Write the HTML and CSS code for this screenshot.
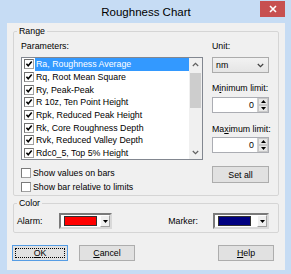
FILE: index.html
```html
<!DOCTYPE html>
<html>
<head>
<meta charset="utf-8">
<link rel="stylesheet" href="styles.css">
</head>
<body>
<div class="window">
  <div class="titlebar">
    <span class="title">Roughness Chart</span>
    <span class="close"><svg width="8" height="8" viewBox="0 0 8 8"><path d="M1 1L7 7M7 1L1 7" stroke="#fff" stroke-width="1.6"/></svg></span>
  </div>
  <div class="client">
    <fieldset class="group range">
      <legend>Range</legend>
      <div class="range-inner">
        <div class="col-left">
          <div class="label">Parameters:</div>
          <div class="listbox">
            <div class="items">
              <div class="item selected"><span class="cb"><svg viewBox="0 0 10 10"><path d="M1.8 4.8L4 7.3L8.4 1.8" fill="none" stroke="#000" stroke-width="1.9"/></svg></span><span class="txt">Ra, Roughness Average</span></div>
              <div class="item"><span class="cb"><svg viewBox="0 0 10 10"><path d="M1.8 4.8L4 7.3L8.4 1.8" fill="none" stroke="#000" stroke-width="1.9"/></svg></span><span class="txt">Rq, Root Mean Square</span></div>
              <div class="item"><span class="cb"><svg viewBox="0 0 10 10"><path d="M1.8 4.8L4 7.3L8.4 1.8" fill="none" stroke="#000" stroke-width="1.9"/></svg></span><span class="txt">Ry, Peak-Peak</span></div>
              <div class="item"><span class="cb"><svg viewBox="0 0 10 10"><path d="M1.8 4.8L4 7.3L8.4 1.8" fill="none" stroke="#000" stroke-width="1.9"/></svg></span><span class="txt">R 10z, Ten Point Height</span></div>
              <div class="item"><span class="cb"><svg viewBox="0 0 10 10"><path d="M1.8 4.8L4 7.3L8.4 1.8" fill="none" stroke="#000" stroke-width="1.9"/></svg></span><span class="txt">Rpk, Reduced Peak Height</span></div>
              <div class="item"><span class="cb"><svg viewBox="0 0 10 10"><path d="M1.8 4.8L4 7.3L8.4 1.8" fill="none" stroke="#000" stroke-width="1.9"/></svg></span><span class="txt">Rk, Core Roughness Depth</span></div>
              <div class="item"><span class="cb"><svg viewBox="0 0 10 10"><path d="M1.8 4.8L4 7.3L8.4 1.8" fill="none" stroke="#000" stroke-width="1.9"/></svg></span><span class="txt">Rvk, Reduced Valley Depth</span></div>
              <div class="item"><span class="cb"><svg viewBox="0 0 10 10"><path d="M1.8 4.8L4 7.3L8.4 1.8" fill="none" stroke="#000" stroke-width="1.9"/></svg></span><span class="txt">Rdc0_5, Top 5% Height</span></div>
            </div>
            <div class="scrollbar">
              <div class="sb-arrow"><svg width="7" height="5" viewBox="0 0 7 5"><path d="M0.8 4L3.5 1.3L6.2 4" fill="none" stroke="#606060" stroke-width="1.2"/></svg></div>
              <div class="sb-track"><div class="sb-thumb"></div></div>
              <div class="sb-arrow"><svg width="7" height="5" viewBox="0 0 7 5"><path d="M0.8 1L3.5 3.7L6.2 1" fill="none" stroke="#606060" stroke-width="1.2"/></svg></div>
            </div>
          </div>
          <div class="check first"><span class="box"></span><span>Show values on bars</span></div>
          <div class="check"><span class="box"></span><span>Show bar relative to limits</span></div>
        </div>
        <div class="col-right">
          <div class="label">Unit:</div>
          <div class="combo"><span>nm</span><svg width="7" height="5" viewBox="0 0 7 5"><path d="M0.8 1L3.5 3.7L6.2 1" fill="none" stroke="#404040" stroke-width="1.2"/></svg></div>
          <div class="label min-label">M<u>i</u>nimum limit:</div>
          <div class="spin min-spin">
            <span class="spin-value">0</span>
            <span class="spin-btns">
              <span class="spin-btn"><svg width="5" height="3" viewBox="0 0 5 3"><path d="M0 3L2.5 0L5 3Z" fill="#000"/></svg></span>
              <span class="spin-btn"><svg width="5" height="3" viewBox="0 0 5 3"><path d="M0 0L2.5 3L5 0Z" fill="#000"/></svg></span>
            </span>
          </div>
          <div class="label max-label">Ma<u>x</u>imum limit:</div>
          <div class="spin max-spin">
            <span class="spin-value">0</span>
            <span class="spin-btns">
              <span class="spin-btn"><svg width="5" height="3" viewBox="0 0 5 3"><path d="M0 3L2.5 0L5 3Z" fill="#000"/></svg></span>
              <span class="spin-btn"><svg width="5" height="3" viewBox="0 0 5 3"><path d="M0 0L2.5 3L5 0Z" fill="#000"/></svg></span>
            </span>
          </div>
          <div class="btn setall">Set all</div>
        </div>
      </div>
    </fieldset>
    <fieldset class="group color">
      <legend>Color</legend>
      <div class="color-inner">
        <span class="alarm-label">Alarm:</span>
        <span class="colorcombo alarm"><span class="swatch red"></span><span class="dd"><svg width="5" height="3" viewBox="0 0 5 3"><path d="M0 0L2.5 3L5 0Z" fill="#000"/></svg></span></span>
        <span class="spacer"></span>
        <span class="marker-label">Marker:</span>
        <span class="colorcombo marker"><span class="swatch navy"></span><span class="dd"><svg width="5" height="3" viewBox="0 0 5 3"><path d="M0 0L2.5 3L5 0Z" fill="#000"/></svg></span></span>
      </div>
    </fieldset>
    <div class="buttons">
      <div class="btn ok"><span class="focus"><u>O</u>K</span></div>
      <div class="btn cancel"><u>C</u>ancel</div>
      <div class="btn help"><u>H</u>elp</div>
    </div>
  </div>
</div>
</body>
</html>
```
FILE: styles.css
```css
* { box-sizing: border-box; }
html, body { margin: 0; padding: 0; }
body {
  width: 291px;
  height: 274px;
  overflow: hidden;
  font-family: "Liberation Sans", Arial, sans-serif;
  font-size: 8.8px;
  color: #000;
  background: #c6dcf4;
}
.window {
  width: 291px;
  height: 274px;
  background: #c6dcf4;
  display: flex;
  flex-direction: column;
  padding: 0 6px 4px 7px;
}
.titlebar {
  height: 23px;
  flex: none;
  display: grid;
  grid-template-columns: 1fr auto 1fr;
  align-items: start;
}
.title {
  grid-column: 2;
  font-size: 11.5px;
  line-height: 24px;
  color: #000;
}
.close {
  grid-column: 3;
  justify-self: end;
  margin-top: 1px;
  width: 25px;
  height: 16px;
  background: #c75050;
  display: flex;
  align-items: center;
  justify-content: center;
}
.client {
  flex: 1;
  background: #f0f0f0;
  display: flex;
  flex-direction: column;
}
.group {
  margin: 0 6px;
  padding: 0;
  min-inline-size: 0;
  border: 1px solid #d5d5d5;
  border-radius: 2px;
}
.group legend {
  padding: 0 2px;
  margin-left: 3px;
  line-height: 10px;
}
.range { margin-top: 3px; }
.range-inner {
  display: grid;
  grid-template-columns: 182px 57px;
  column-gap: 9px;
  padding: 5px 9px 1px 7px;
}
.label { line-height: 10px; white-space: nowrap; }
.listbox {
  margin-top: 6px;
  height: 103px;
  border: 1px solid #828790;
  background: #fff;
  display: flex;
}
.items { flex: 1; padding-left: 2px; }
.item {
  height: 12.7px;
  display: flex;
  align-items: center;
}
.cb {
  width: 10px;
  height: 10px;
  flex: none;
  background: #fff;
  border: 1px solid #a0a0a0;
  border-top-color: #707070;
  border-left-color: #707070;
  display: flex;
}
.cb svg { width: 100%; height: 100%; }
.txt {
  flex: 1;
  height: 100%;
  margin-left: 1px;
  padding-left: 1px;
  display: flex;
  align-items: center;
  white-space: nowrap;
}
.item.selected .txt { background: #3399ff; color: #fff; }
.scrollbar {
  width: 13px;
  flex: none;
  background: #f0f0f0;
  display: flex;
  flex-direction: column;
}
.sb-arrow {
  height: 13px;
  display: flex;
  align-items: center;
  justify-content: center;
}
.sb-track { flex: 1; padding: 2px 1px 0; }
.sb-thumb { height: 35px; background: #cdcdcd; }
.check {
  height: 14px;
  display: flex;
  align-items: center;
  gap: 2px;
  white-space: nowrap;
}
.check.first { margin-top: 6px; }
.box {
  width: 10px;
  height: 10px;
  background: #fff;
  border: 1px solid #a0a0a0;
  border-top-color: #7a7a7a;
  border-left-color: #7a7a7a;
}
.col-right { display: flex; flex-direction: column; }
.combo {
  margin-top: 6px;
  height: 16px;
  border: 1px solid #acacac;
  background: linear-gradient(#f2f2f2, #e5e5e5);
  display: flex;
  align-items: center;
  justify-content: space-between;
  padding: 0 4px 0 3px;
}
.min-label { margin-top: 10px; }
.max-label { margin-top: 11px; }
.spin {
  height: 16px;
  border: 1px solid #abadb3;
  background: #fff;
  display: flex;
}
.min-spin { margin-top: 4px; }
.max-spin { margin-top: 3px; }
.spin-value {
  flex: 1;
  text-align: right;
  padding-right: 3px;
  line-height: 14px;
}
.spin-btns {
  width: 11px;
  display: flex;
  flex-direction: column;
  border-left: 1px solid #d0d0d0;
}
.spin-btn {
  flex: 1;
  background: #e8e8e8;
  border: 1px solid #c8c8c8;
  display: flex;
  align-items: center;
  justify-content: center;
}
.btn {
  height: 16px;
  background: #e1e1e1;
  border: 1px solid #adadad;
  display: flex;
  align-items: center;
  justify-content: center;
  white-space: nowrap;
}
.setall { margin-top: 13px; height: 17px; }
.color { margin-top: 2px; }
.color-inner {
  display: flex;
  align-items: center;
  padding: 5px 9px 3px 3px;
}
.alarm-label { width: 42px; }
.marker-label { margin-right: 15px; }
.spacer { flex: 1; }
.colorcombo {
  height: 16px;
  border: 2px solid #d9d9d9;
  border-top-color: #7a7a7a;
  border-left-color: #7a7a7a;
  background: #fff;
  display: flex;
  align-items: center;
  padding-left: 3px;
}
.alarm { width: 53px; }
.marker { width: 56px; }
.swatch {
  width: 33px;
  height: 10px;
  border: 1px solid #303030;
}
.swatch.red { background: #ff0000; }
.swatch.navy { background: #000080; }
.dd {
  margin-left: auto;
  width: 10px;
  height: 12px;
  background: #f0f0f0;
  border: 1px solid #a0a0a0;
  border-top-color: #fff;
  border-left-color: #fff;
  display: flex;
  align-items: center;
  justify-content: center;
}
.buttons {
  margin-top: 12px;
  display: flex;
  padding: 0 11px 0 5px;
}
.buttons .btn { width: 56px; }
.ok { border-color: #569de5; padding: 2px; }
.ok .focus {
  width: 100%;
  height: 100%;
  border: 1px dotted #000;
  display: flex;
  align-items: center;
  justify-content: center;
}
.cancel { margin-left: 11px; }
.help { margin-left: auto; }
```
